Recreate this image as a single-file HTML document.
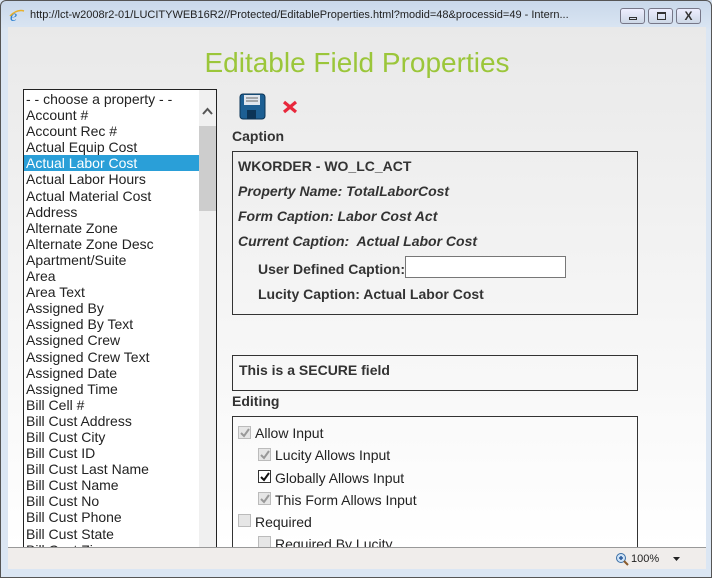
<!DOCTYPE html>
<html><head><style>
*{margin:0;padding:0;box-sizing:border-box}
body{width:712px;height:578px;overflow:hidden;background:#d9e4f1;font-family:"Liberation Sans",sans-serif;position:relative}
.a{position:absolute}
#frame{left:0;top:0;width:712px;height:578px;border:1px solid #555;border-radius:6px 6px 0 0;background:linear-gradient(#c9d8ea,#dbe6f3 30px)}
#content{left:8px;top:27px;width:698px;height:520px;background:linear-gradient(#e9e9e9,#ffffff 520px);overflow:hidden}
#status{left:8px;top:547px;width:698px;height:22px;background:#f0edeb;border-top:1px solid #999;font-size:11px}
.t{font-size:14px;color:#333;font-weight:bold;white-space:nowrap}
.i{font-style:italic}
.list{left:15px;top:62px;width:194px;height:470px;border:1px solid #222;background:#fff;overflow:hidden}
.list div:not(.a){height:16.1px;line-height:16px;font-size:14px;color:#222;padding-left:2px;white-space:nowrap;position:relative;top:1px}
.list .sel{background:#2a9fd8;color:#fff!important}
.box{border:1px solid #333}
.cb{width:13px;height:13px;border:1px solid #bbb;background:#e6e6e6;display:inline-block;position:absolute}
.lbl{font-size:14px;color:#222;position:absolute;white-space:nowrap}
</style></head><body>
<div class="a" id="frame"></div>
<svg class="a" style="left:9px;top:7px" width="16" height="16" viewBox="0 0 16 16"><text x="1" y="14" font-size="16" font-style="italic" fill="#2a7fd0" font-family="Liberation Serif">e</text><path d="M1 9 Q8 2 15 4" stroke="#e8b02a" stroke-width="1.5" fill="none"/></svg>
<div class="a" style="left:30px;top:9px;font-size:11px;color:#222;white-space:nowrap">http://lct-w2008r2-01/LUCITYWEB16R2//Protected/EditableProperties.html?modid=48&amp;processid=49 - Intern...</div>
<div class="a" style="left:620px;top:8px;width:25px;height:16px;border:1px solid #778;border-radius:3px;background:linear-gradient(#eef,#cdd8e6)"><div class="a" style="left:8px;top:8px;width:8px;height:3px;border:1px solid #333"></div></div>
<div class="a" style="left:648px;top:8px;width:25px;height:16px;border:1px solid #778;border-radius:3px;background:linear-gradient(#eef,#cdd8e6)"><div class="a" style="left:8px;top:3px;width:9px;height:8px;border:1px solid #333;border-top-width:2px"></div></div>
<div class="a" style="left:676px;top:8px;width:25px;height:16px;border:1px solid #778;border-radius:3px;background:linear-gradient(#eef,#cdd8e6);font-size:12px;text-align:center;line-height:14px;color:#333;font-weight:bold">X</div>
<div class="a" id="content">
 <div class="a" style="left:0;width:698px;top:20px;text-align:center;font-size:28px;color:#9bc63a">Editable Field Properties</div>
 <div class="a list">
  <div>- - choose a property - -</div><div>Account #</div><div>Account Rec #</div><div>Actual Equip Cost</div><div class="sel">Actual Labor Cost</div><div>Actual Labor Hours</div><div>Actual Material Cost</div><div>Address</div><div>Alternate Zone</div><div>Alternate Zone Desc</div><div>Apartment/Suite</div><div>Area</div><div>Area Text</div><div>Assigned By</div><div>Assigned By Text</div><div>Assigned Crew</div><div>Assigned Crew Text</div><div>Assigned Date</div><div>Assigned Time</div><div>Bill Cell #</div><div>Bill Cust Address</div><div>Bill Cust City</div><div>Bill Cust ID</div><div>Bill Cust Last Name</div><div>Bill Cust Name</div><div>Bill Cust No</div><div>Bill Cust Phone</div><div>Bill Cust State</div><div>Bill Cust Zip</div>
  <div class="a" style="left:175px;top:0;width:17px;height:470px;background:#f0f0f0"></div>
  <div class="a" style="left:175px;top:36px;width:17px;height:85px;background:#cdcdcd"></div>
  <svg class="a" style="left:177px;top:16px" width="13" height="10"><path d="M2 8 L6.5 3 L11 8" stroke="#555" stroke-width="2" fill="none"/></svg>
 </div>
 <svg class="a" style="left:231px;top:66px" width="28" height="28" viewBox="0 0 28 28"><rect x="1" y="1" width="25" height="25" rx="3" fill="#1d5f93" stroke="#0c3456"/><rect x="5" y="2" width="16" height="10" fill="#dfe6ee"/><line x1="7" y1="5" x2="19" y2="5" stroke="#666"/><line x1="7" y1="8" x2="19" y2="8" stroke="#666"/><rect x="8" y="17" width="9" height="9" fill="#0c3456"/></svg>
 <svg class="a" style="left:274px;top:73px" width="16" height="14" viewBox="0 0 16 14"><path d="M2 2 L14 12 M14 2 L2 12" stroke="#e8283c" stroke-width="3.2"/></svg>
 <div class="a t" style="left:224px;top:101px">Caption</div>
 <div class="a box" style="left:224px;top:124px;width:406px;height:164px"></div>
 <div class="a t" style="left:230px;top:131px">WKORDER - WO_LC_ACT</div>
 <div class="a t i" style="left:230px;top:156px">Property Name: TotalLaborCost</div>
 <div class="a t i" style="left:230px;top:181px">Form Caption: Labor Cost Act</div>
 <div class="a t i" style="left:230px;top:206px">Current Caption:&nbsp; Actual Labor Cost</div>
 <div class="a t" style="left:250px;top:234px">User Defined Caption:</div>
 <div class="a" style="left:397px;top:229px;width:161px;height:22px;border:1px solid #777;background:#fff"></div>
 <div class="a t" style="left:250px;top:259px">Lucity Caption: Actual Labor Cost</div>
 <div class="a box" style="left:224px;top:328px;width:406px;height:36px"></div>
 <div class="a t" style="left:231px;top:335px">This is a SECURE field</div>
 <div class="a t" style="left:224px;top:366px">Editing</div>
 <div class="a box" style="left:224px;top:389px;width:406px;height:140px"></div>
 <div class="cb" style="left:230px;top:399px"></div><svg class="a" style="left:231px;top:400px" width="12" height="12"><path d="M2 6 L5 9 L10 2" stroke="#999" stroke-width="2" fill="none"/></svg><div class="lbl" style="left:247px;top:398px">Allow Input</div>
 <div class="cb" style="left:250px;top:421px"></div><svg class="a" style="left:251px;top:422px" width="12" height="12"><path d="M2 6 L5 9 L10 2" stroke="#999" stroke-width="2" fill="none"/></svg><div class="lbl" style="left:267px;top:420px">Lucity Allows Input</div>
 <div class="cb" style="left:250px;top:443px;background:#fff;border-color:#333"></div><svg class="a" style="left:251px;top:444px" width="12" height="12"><path d="M2 6 L5 9 L10 2" stroke="#111" stroke-width="2" fill="none"/></svg><div class="lbl" style="left:267px;top:443px">Globally Allows Input</div>
 <div class="cb" style="left:250px;top:465px"></div><svg class="a" style="left:251px;top:466px" width="12" height="12"><path d="M2 6 L5 9 L10 2" stroke="#999" stroke-width="2" fill="none"/></svg><div class="lbl" style="left:267px;top:465px">This Form Allows Input</div>
 <div class="cb" style="left:230px;top:487px"></div><div class="lbl" style="left:247px;top:487px">Required</div>
 <div class="cb" style="left:250px;top:509px"></div><div class="lbl" style="left:267px;top:509px">Required By Lucity</div>
</div>
<div class="a" id="status">
 <svg class="a" style="left:607px;top:4px" width="14" height="14"><circle cx="6" cy="6" r="4.5" fill="#cfe3f7" stroke="#3a6ea5"/><path d="M4 6h4M6 4v4" stroke="#2a5a9a" stroke-width="1.5"/><path d="M9 9 L13 13" stroke="#8a5a2a" stroke-width="2"/></svg>
 <div class="a" style="left:623px;top:5px;color:#222">100%</div>
 <svg class="a" style="left:665px;top:9px" width="8" height="5"><path d="M0 0h7l-3.5 4z" fill="#222"/></svg>
</div>
</body></html>
